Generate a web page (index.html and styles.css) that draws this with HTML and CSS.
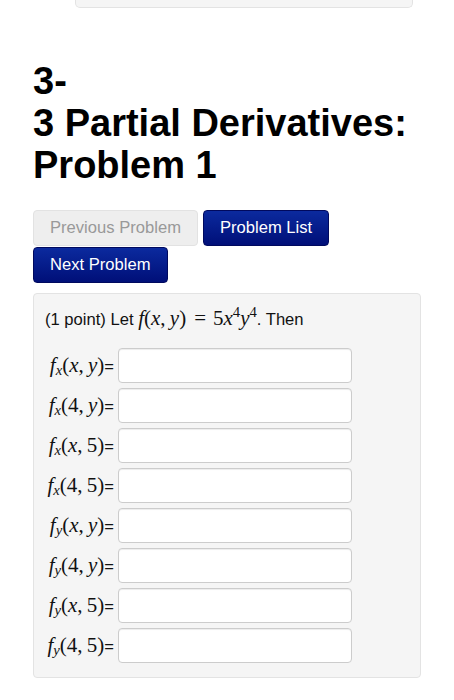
FILE: index.html
```html
<!DOCTYPE html>
<html lang="en">
<head>
    <meta charset="UTF-8">
    <meta name="viewport" content="width=device-width, initial-scale=1.0">
    <title>3- 3 Partial Derivatives: Problem 1</title>
    <link rel="stylesheet" href="styles.css">
</head>
<body>
    <div class="top-card"></div>

    <div class="main">
        <h1 class="page-title">3-<br>3 Partial Derivatives: Problem 1</h1>

        <div class="nav-buttons">
            <button class="nav-btn disabled">Previous Problem</button>
            <button class="nav-btn">Problem List</button>
            <button class="nav-btn">Next Problem</button>
        </div>

        <div class="problem">
            <p class="problem-text">
                (1 point) Let
                <span class="math"><i>f</i>(<i>x</i>,&thinsp;<i>y</i>)<span class="eq">=</span>5<i>x</i><sup>4</sup><i>y</i><sup>4</sup></span>. Then
            </p>

            <div class="answers">
                <label class="answer-label"><span class="math"><i>f</i><sub>x</sub>(<i>x</i>,&thinsp;<i>y</i>)</span>=</label>
                <input type="text" class="answer-input">

                <label class="answer-label"><span class="math"><i>f</i><sub>x</sub>(4,&thinsp;<i>y</i>)</span>=</label>
                <input type="text" class="answer-input">

                <label class="answer-label"><span class="math"><i>f</i><sub>x</sub>(<i>x</i>,&thinsp;5)</span>=</label>
                <input type="text" class="answer-input">

                <label class="answer-label"><span class="math"><i>f</i><sub>x</sub>(4,&thinsp;5)</span>=</label>
                <input type="text" class="answer-input">

                <label class="answer-label"><span class="math"><i>f</i><sub>y</sub>(<i>x</i>,&thinsp;<i>y</i>)</span>=</label>
                <input type="text" class="answer-input">

                <label class="answer-label"><span class="math"><i>f</i><sub>y</sub>(4,&thinsp;<i>y</i>)</span>=</label>
                <input type="text" class="answer-input">

                <label class="answer-label"><span class="math"><i>f</i><sub>y</sub>(<i>x</i>,&thinsp;5)</span>=</label>
                <input type="text" class="answer-input">

                <label class="answer-label"><span class="math"><i>f</i><sub>y</sub>(4,&thinsp;5)</span>=</label>
                <input type="text" class="answer-input">
            </div>
        </div>
    </div>
</body>
</html>
```

FILE: styles.css
```css
* {
    margin: 0;
    padding: 0;
    box-sizing: border-box;
}

body {
    font-family: 'Liberation Sans', Arial, sans-serif;
    font-size: 16.6px;
    color: #111;
    background-color: #ffffff;
}

.top-card {
    margin-left: 75px;
    width: 338px;
    height: 8px;
    background-color: #f5f5f5;
    border: 1px solid #e3e3e3;
    border-top: none;
    border-radius: 0 0 5px 5px;
}

.main {
    padding: 0 33px;
}

.page-title {
    font-size: 38px;
    line-height: 42px;
    font-weight: bold;
    color: #000;
    margin: 52px 0 24px;
}

.nav-buttons {
    display: flex;
    flex-wrap: wrap;
    gap: 1px 5px;
}

.nav-btn {
    font-family: 'Liberation Sans', Arial, sans-serif;
    font-size: 16.6px;
    line-height: 20px;
    padding: 7px 16px;
    color: #ffffff;
    background: linear-gradient(#0b2a9e, #000f78);
    border: 1px solid #00095e;
    border-radius: 4px;
}

.nav-btn.disabled {
    color: #999999;
    background: #eeeeee;
    border-color: #e2e2e2;
}

.problem {
    margin-top: 10px;
    background-color: #f5f5f5;
    border: 1px solid #e3e3e3;
    border-radius: 4px;
    padding: 14px 11px 14px;
}

.problem-text {
    font-size: 16.6px;
    line-height: 20px;
    margin-bottom: 18px;
}

.math {
    font-family: 'Liberation Serif', 'Times New Roman', serif;
    font-size: 21px;
    line-height: 1;
}

.math i {
    font-style: italic;
}

.math .eq {
    margin: 0 7px 0 8px;
}

.math sup {
    font-size: 0.7em;
    line-height: 0;
    vertical-align: 0.55em;
}

.math sub {
    font-size: 0.7em;
    font-style: italic;
    line-height: 0;
    vertical-align: -0.2em;
}

.answers {
    display: grid;
    grid-template-columns: 69px 234px;
    column-gap: 4px;
    row-gap: 5px;
    align-items: center;
}

.answer-label {
    justify-self: end;
    white-space: nowrap;
    font-size: 16.6px;
}

.answer-input {
    height: 35px;
    background-color: #ffffff;
    border: 1px solid #cccccc;
    border-radius: 4px;
    box-shadow: inset 0 1px 1px rgba(0, 0, 0, 0.075);
    padding: 4px 6px;
    font-size: 16px;
    outline: none;
}
```
